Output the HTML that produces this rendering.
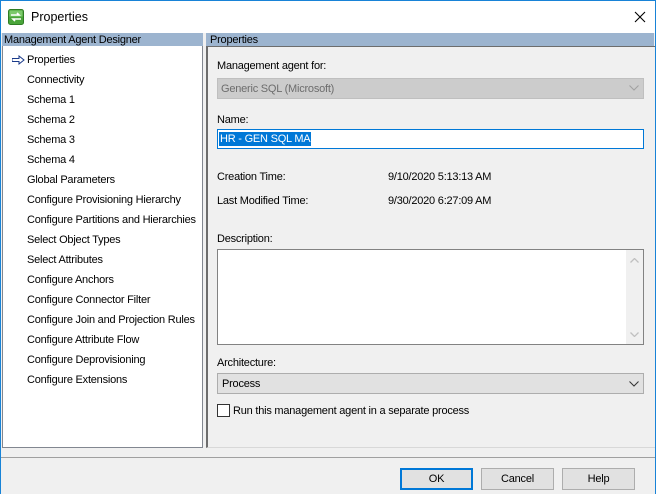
<!DOCTYPE html>
<html><head><meta charset="utf-8"><style>
*{margin:0;padding:0;box-sizing:border-box}
body{width:656px;height:494px;background:#f0f0f0;font-family:"Liberation Sans",Arial,sans-serif;font-size:11px;letter-spacing:-0.22px;color:#000;position:relative;overflow:hidden}
.a{position:absolute}
.win{position:absolute;left:0;top:0;width:656px;height:494px;border:1px solid #1883d7;border-bottom:none}
.title{left:1px;top:1px;width:654px;height:32px;background:#fff}
.hdr{background:#9cb4cf;height:13px;font-size:11px;line-height:14px;padding-left:2px;color:#000}
.list{left:2px;top:46px;width:201px;height:402px;background:#fff;border:1px solid #828790;border-top:none}
.list div{position:absolute;left:24px;white-space:nowrap}
.lbl{white-space:nowrap}
.btn{height:22px;width:73px;background:#e1e1e1;border:1px solid #adadad;text-align:center;line-height:21px;font-size:11px}
</style></head><body>
<div class="win"></div>
<div class="a title"></div>
<svg class="a" style="left:8px;top:9px" width="16" height="16" viewBox="0 0 16 16"><rect x="0.5" y="0.5" width="15" height="15" rx="2" fill="#4aa53a" stroke="#2f7d24"/><rect x="1.5" y="1.5" width="13" height="6" fill="#7cc96b"/><path d="M3 6h8l-2-2M13 10H5l2 2" stroke="#fff" stroke-width="1.6" fill="none"/></svg>
<div class="a lbl" style="left:31px;top:10px;font-size:12.5px;letter-spacing:0">Properties</div>
<svg class="a" style="left:634px;top:11px" width="12" height="12"><path d="M1 1L11 11M11 1L1 11" stroke="#000" stroke-width="1.1"/></svg>

<div class="a hdr" style="left:2px;top:33px;width:201px">Management Agent Designer</div>
<div class="a list">
<svg style="position:absolute;left:9px;top:9px" width="14" height="10"><path d="M0 3.5h7V1l5 4-5 4V6.5H0z" fill="#fff" stroke="#1a3a8a"/></svg>
<div style="top:8px">Properties</div>
<div style="top:28px">Connectivity</div>
<div style="top:48px">Schema 1</div>
<div style="top:68px">Schema 2</div>
<div style="top:88px">Schema 3</div>
<div style="top:108px">Schema 4</div>
<div style="top:128px">Global Parameters</div>
<div style="top:148px">Configure Provisioning Hierarchy</div>
<div style="top:168px">Configure Partitions and Hierarchies</div>
<div style="top:188px">Select Object Types</div>
<div style="top:208px">Select Attributes</div>
<div style="top:228px">Configure Anchors</div>
<div style="top:248px">Configure Connector Filter</div>
<div style="top:268px">Configure Join and Projection Rules</div>
<div style="top:288px">Configure Attribute Flow</div>
<div style="top:308px">Configure Deprovisioning</div>
<div style="top:328px">Configure Extensions</div>
</div>

<div class="a hdr" style="left:206px;top:33px;width:448px;padding-left:4px">Properties</div>
<div class="a" style="left:206px;top:46px;width:449px;height:402px;border-left:2px solid #6d6d6d;border-top:1px solid #6d6d6d;border-bottom:1px solid #d8d8d8"></div>

<div class="a lbl" style="left:217px;top:60px">Management agent for:</div>
<div class="a" style="left:217px;top:78px;width:427px;height:21px;background:#cccccc;border:1px solid #bfbfbf;color:#6d6d6d;padding:4px 0 0 3px">Generic SQL (Microsoft)</div>
<svg class="a" style="left:629px;top:85px" width="10" height="6"><path d="M0.5 0.5l4.5 4.5 4.5-4.5" stroke="#a0a0a0" fill="none"/></svg>

<div class="a lbl" style="left:217px;top:114px">Name:</div>
<div class="a" style="left:217px;top:129px;width:427px;height:20px;background:#fff;border:1px solid #0078d7"></div>
<div class="a lbl" style="left:219px;top:132px;background:#0078d7;color:#fff;padding:1px 1px 0;height:14px">HR - GEN SQL MA</div>

<div class="a lbl" style="left:217px;top:171px">Creation Time:</div>
<div class="a lbl" style="left:388px;top:171px">9/10/2020 5:13:13 AM</div>
<div class="a lbl" style="left:217px;top:195px">Last Modified Time:</div>
<div class="a lbl" style="left:388px;top:195px">9/30/2020 6:27:09 AM</div>

<div class="a lbl" style="left:217px;top:233px">Description:</div>
<div class="a" style="left:217px;top:249px;width:427px;height:96px;background:#fff;border:1px solid #828282"></div>
<div class="a" style="left:626px;top:250px;width:17px;height:94px;background:#f0f0f0"></div>
<svg class="a" style="left:630px;top:258px" width="9" height="5"><path d="M0.5 4.5l4-4 4 4" stroke="#c0c0c0" fill="none" stroke-width="1.3"/></svg>
<svg class="a" style="left:630px;top:332px" width="9" height="5"><path d="M0.5 0.5l4 4 4-4" stroke="#c0c0c0" fill="none" stroke-width="1.3"/></svg>

<div class="a lbl" style="left:217px;top:357px">Architecture:</div>
<div class="a" style="left:217px;top:373px;width:427px;height:21px;background:#e1e1e1;border:1px solid #adadad;padding:4px 0 0 4px">Process</div>
<svg class="a" style="left:629px;top:381px" width="10" height="6"><path d="M0.5 0.5l4.5 4.5 4.5-4.5" stroke="#333" fill="none"/></svg>

<div class="a" style="left:217px;top:404px;width:13px;height:13px;background:#fff;border:1px solid #333"></div>
<div class="a lbl" style="left:233px;top:405px">Run this management agent in a separate process</div>

<div class="a" style="left:1px;top:457px;width:654px;height:1px;background:#a0a0a0"></div>
<div class="a btn" style="left:400px;top:468px;border:2px solid #0078d7;line-height:19px">OK</div>
<div class="a btn" style="left:481px;top:468px">Cancel</div>
<div class="a btn" style="left:562px;top:468px">Help</div>
</body></html>
